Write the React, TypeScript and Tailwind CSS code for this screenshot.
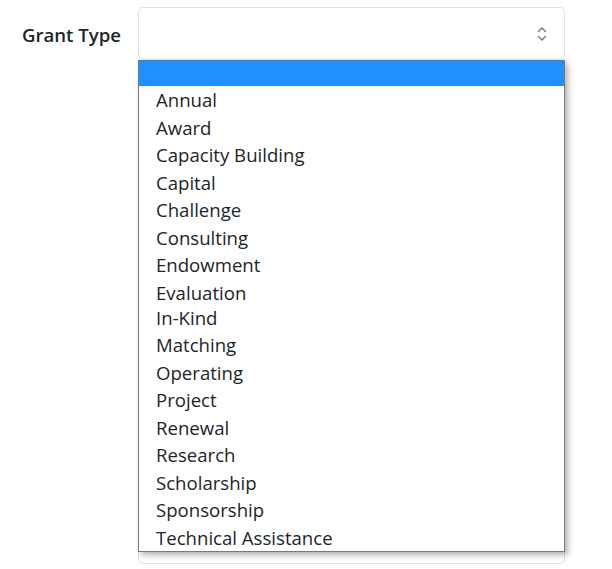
import { ChevronsUpDown } from "lucide-react";

const grantTypes = [
	"Annual",
	"Award",
	"Capacity Building",
	"Capital",
	"Challenge",
	"Consulting",
	"Endowment",
	"Evaluation",
	"In-Kind",
	"Matching",
	"Operating",
	"Project",
	"Renewal",
	"Research",
	"Scholarship",
	"Sponsorship",
	"Technical Assistance",
];

export default function App() {
	return (
		<div className="w-[612px] h-[569px] bg-white font-['Open_Sans',sans-serif] text-[#212529]">
			<div className="flex pt-[7px]">
				<div className="w-[138px] pl-[22px] pt-[14px]">
					<span className="text-[18.6px] font-semibold">Grant Type</span>
				</div>
				<div className="relative w-[427px]">
					<div className="h-[53px] border border-[#dee2e6] rounded-[5px] flex items-center justify-end pr-[17px]">
						<svg width="10" height="16" viewBox="0 0 10 16" fill="none" stroke="#6c757d" strokeWidth="1.4" strokeLinecap="round" strokeLinejoin="round">
							<path d="M1.5 5.5 L5 2 L8.5 5.5" />
							<path d="M1.5 10.5 L5 14 L8.5 10.5" />
						</svg>
					</div>
					<div className="mt-[11px] h-[493px] border border-[#dee2e6] rounded-[5px]" />
					<div className="absolute left-0 top-[53px] w-[427px] bg-white border border-[#7a7a7a] shadow-[3px_3px_6px_rgba(0,0,0,0.3)]">
						<div className="h-[25px] bg-[#1e90ff]" />
						{grantTypes.map((t) => (
							<div
								key={t}
								className={`pl-[17px] text-[18.6px] leading-[28.5px] ${t === "Evaluation" ? "h-[25px]" : "h-[27.5px]"}`}
							>
								{t}
							</div>
						))}
					</div>
				</div>
			</div>
		</div>
	);
}
